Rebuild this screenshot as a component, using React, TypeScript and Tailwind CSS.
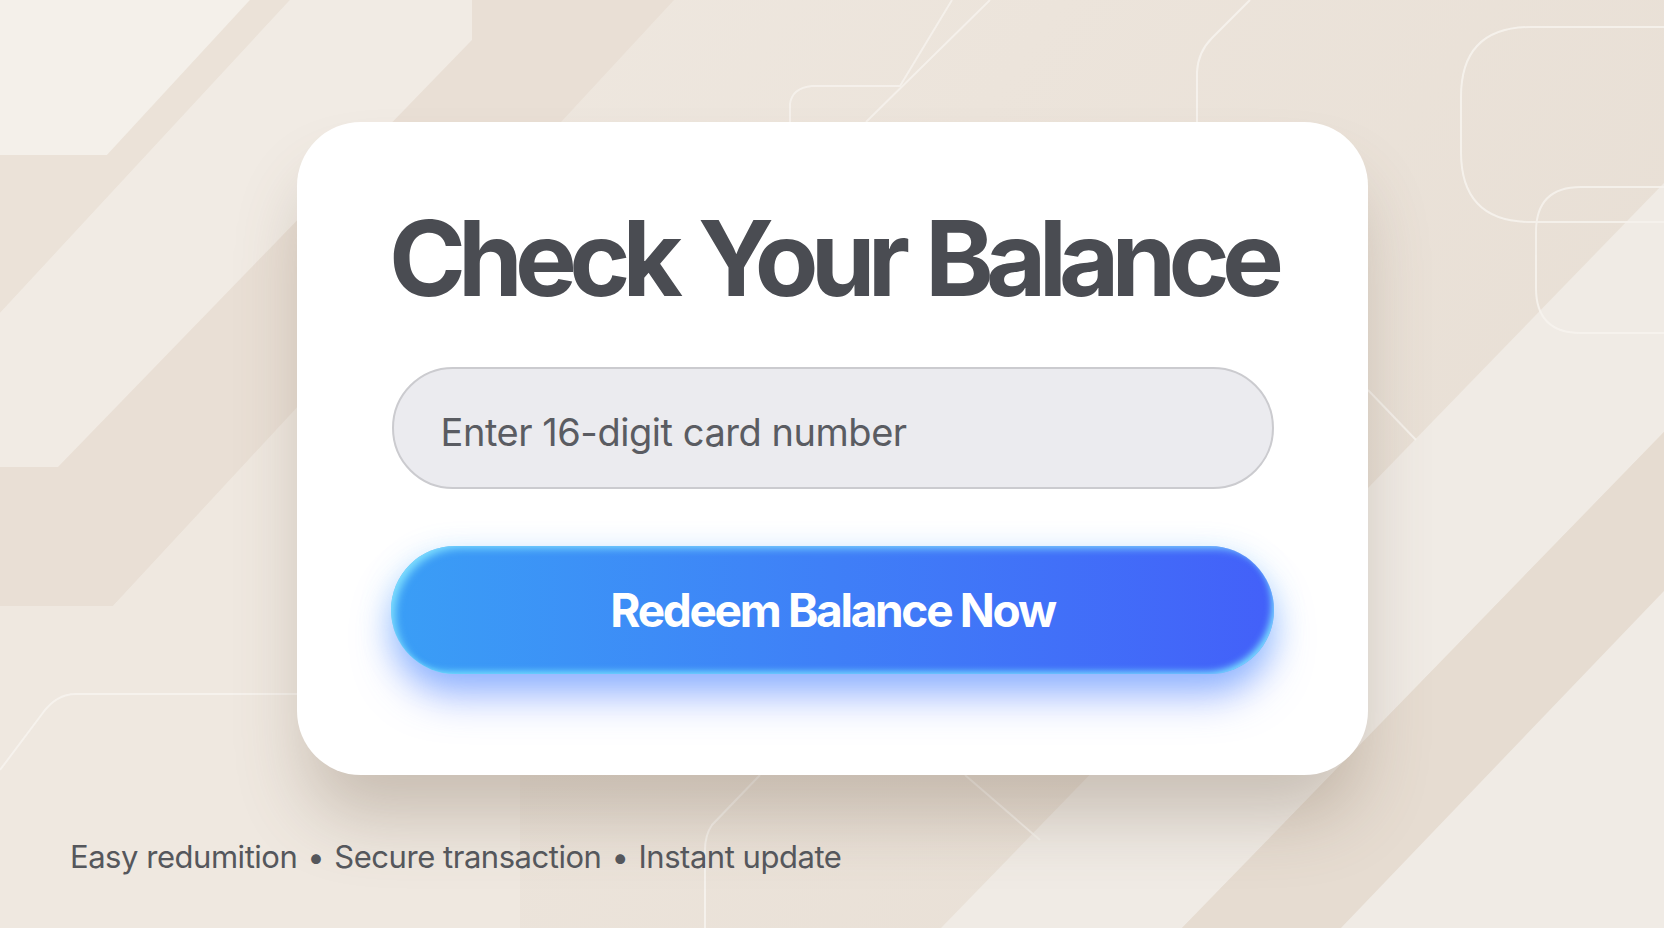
import React from "react";

// background drawing: diagonal beige bands and thin outline strokes
function Backdrop() {
  return (
    <svg
      className="absolute inset-0 h-full w-full"
      viewBox="0 0 1664 928"
      preserveAspectRatio="none"
    >
      <defs>
        <linearGradient id="mid" x1="0" y1="0" x2="1" y2="0.4">
          <stop offset="0" stopColor="#f0eae3" />
          <stop offset="0.55" stopColor="#ece4db" />
          <stop offset="1" stopColor="#e8dfd5" />
        </linearGradient>
      </defs>
      <rect width="1664" height="928" fill="url(#mid)" />
      <polygon points="0,0 250,0 107,155 0,155" fill="#f4f0ea" />
      <polygon points="250,0 290,0 0,313 0,155 107,155" fill="#ebe2d8" />
      <polygon points="290,0 472,0 472,40 58,467 0,467 0,313" fill="#f1ebe4" />
      <polygon points="472,0 674,0 113,606 0,606 0,467 58,467 472,40" fill="#e9dfd5" />
      <polygon points="0,606 113,606 520,168 520,928 0,928" fill="#efe8e0" />
      <polygon points="1664,183 1664,432 1182,928 941,928" fill="#f0ebe5" />
      <polygon points="1664,432 1664,591 1341,928 1182,928" fill="#e6dcd1" />
      <polygon points="1664,591 1664,928 1341,928" fill="#f0ebe5" />
      <g fill="none" stroke="#f7f3ee" strokeWidth="2" opacity="0.85">
        <path d="M790 122 L790 104 Q792 88 812 86 L900 86 L952 0" />
        <path d="M990 0 L866 122" />
        <path d="M1197 122 L1197 72 Q1198 52 1212 38 L1250 0" />
        <path d="M1664 27 L1531 27 Q1461 27 1461 97 L1461 152 Q1461 222 1531 222 L1664 222" />
        <path d="M1664 187 L1581 187 Q1536 187 1536 232 L1536 288 Q1536 333 1581 333 L1664 333" />
        <path d="M297 694 L76 694 Q56 694 42 714 L0 770" />
        <path d="M760 775 L712 825 Q705 835 705 850 L705 928" />
        <path d="M965 775 L1040 840" />
        <path d="M1368 390 L1416 440" />
      </g>
    </svg>
  );
}

export default function App() {
  const features = ["Easy redumition", "Secure transaction", "Instant update"];

  return (
    <div
      className="relative h-[928px] w-[1664px] overflow-hidden bg-[#ece4db]"
      style={{ fontFamily: "Inter, 'Noto Sans', sans-serif" }}
    >
      <Backdrop />
      <div className="relative flex flex-col pt-[122px]">
        <div className="ml-[297px] flex h-[653px] w-[1071px] flex-col items-center rounded-[64px] bg-white pt-[84px] shadow-[0_50px_70px_-10px_rgba(110,90,70,0.3)]">
          <h1 className="text-[104px] font-bold leading-none tracking-[-0.075em] text-[#4a4c52] [word-spacing:6px]">
            Check Your Balance
          </h1>
          <input
            type="text"
            placeholder="Enter 16-digit card number"
            className="mt-[57px] h-[122px] w-[882px] rounded-full border-2 border-[#cbcbcf] bg-[#ebebef] pl-[47px] pt-[7px] text-[38px] tracking-[-0.012em] text-[#5a5c62] outline-none placeholder:text-[#5a5c62]"
          />
          <button className="mt-[57px] flex h-[128px] w-[883px] items-center justify-center rounded-full bg-gradient-to-r from-[#3a9ef6] via-[#3f7ff7] to-[#4360f9] text-[46px] font-bold tracking-[-0.05em] text-white shadow-[inset_7px_5px_8px_-3px_rgba(140,235,255,0.85),inset_-5px_-5px_7px_-3px_rgba(130,240,255,0.9),0_26px_40px_-4px_rgba(80,120,255,0.5),0_8px_30px_rgba(90,190,255,0.35)]">
            Redeem Balance Now
          </button>
        </div>
        <p className="ml-[70px] mt-[66px] text-[31px] leading-none tracking-[-0.015em] text-[#55575c]">
          {features.map((f, i) => (
            <span key={f}>
              {i > 0 && <span className="mx-[10px]">•</span>}
              {f}
            </span>
          ))}
        </p>
      </div>
    </div>
  );
}
